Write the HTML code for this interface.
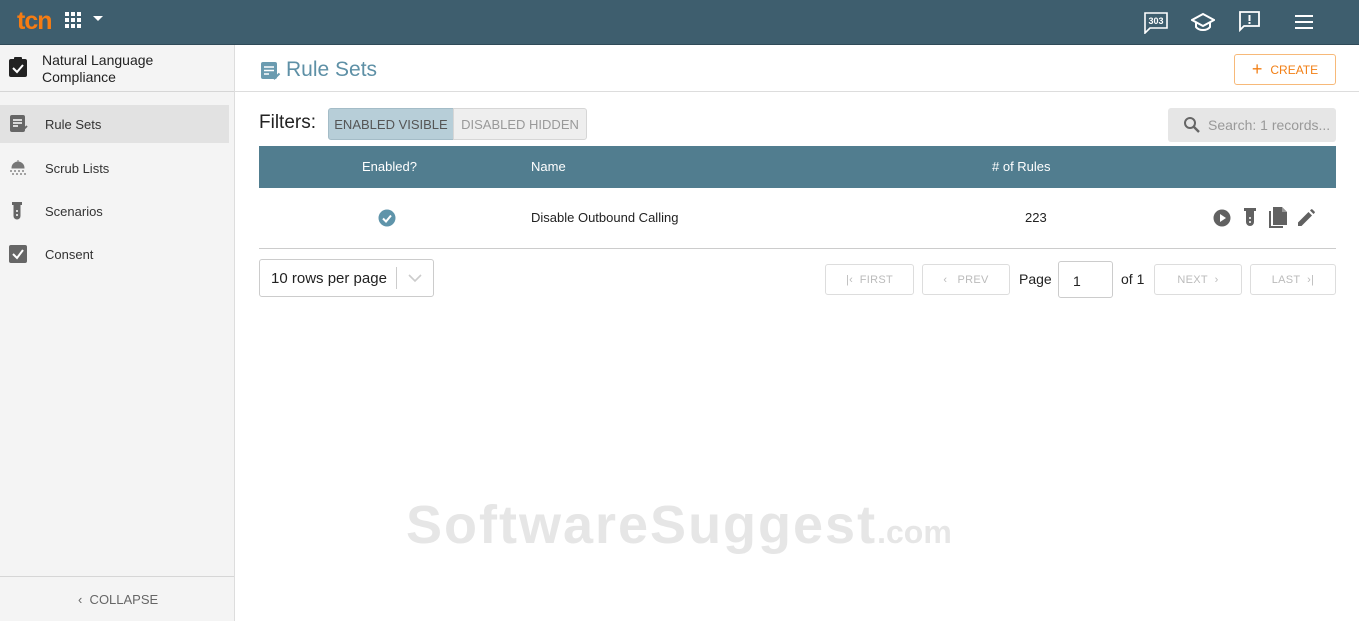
<!DOCTYPE html>
<html><head><meta charset="utf-8"><style>
*{box-sizing:border-box;margin:0;padding:0}
body{width:1359px;height:621px;overflow:hidden;font-family:"Liberation Sans",sans-serif;background:#fff;position:relative;color:#222}
.top{position:absolute;left:0;top:0;width:1359px;height:45px;background:#3e5e6e;border-bottom:1px solid #2f4a58}
.side{position:absolute;left:0;top:45px;width:235px;height:576px;background:#f4f4f4;border-right:1px solid #ddd}
.abs{position:absolute}
.nav{position:absolute;left:0;width:229px;height:38px;font-size:13px;color:#333;display:flex;align-items:center}
.nav span{position:absolute;left:45px}
.btn{position:absolute;height:31px;border:1px solid #ddd;border-radius:3px;font-size:11px;color:#bbb;display:flex;align-items:center;justify-content:center;letter-spacing:.3px}
</style></head><body>
<div class="top">
 <div class="abs" style="left:17px;top:7px;font-size:25px;font-weight:bold;color:#f57c13;letter-spacing:-1px">tcn</div>
 <svg class="abs" style="left:65px;top:12px" width="17" height="16"><g fill="#fff"><rect x="0" y="0" width="4" height="4"/><rect x="6" y="0" width="4" height="4"/><rect x="12" y="0" width="4" height="4"/><rect x="0" y="6" width="4" height="4"/><rect x="6" y="6" width="4" height="4"/><rect x="12" y="6" width="4" height="4"/><rect x="0" y="12" width="4" height="4"/><rect x="6" y="12" width="4" height="4"/><rect x="12" y="12" width="4" height="4"/></g></svg>
 <svg class="abs" style="left:93px;top:16px" width="10" height="6"><path d="M0 0h10L5 5z" fill="#fff"/></svg>
 <svg class="abs" style="left:1144px;top:12px" width="24" height="22"><path d="M1 1h22v15H6l-5 5z" fill="none" stroke="#fff" stroke-width="1.6"/><text x="12" y="12" fill="#fff" font-size="9" font-weight="bold" text-anchor="middle" font-family="Liberation Sans">303</text></svg>
 <svg class="abs" style="left:1191px;top:12px" width="24" height="20"><path d="M12 2L1 8l11 6 11-6z" fill="none" stroke="#fff" stroke-width="2"/><path d="M5 10v5c3 4 11 4 14 0v-5" fill="none" stroke="#fff" stroke-width="2"/></svg>
 <svg class="abs" style="left:1239px;top:11px" width="21" height="21"><path d="M1 1h19v14H5l-4 4z" fill="none" stroke="#fff" stroke-width="1.8"/><rect x="9.5" y="4" width="2" height="6" fill="#fff"/><rect x="9.5" y="11" width="2" height="2" fill="#fff"/></svg>
 <svg class="abs" style="left:1295px;top:15px" width="18" height="14"><g fill="#fff"><rect y="0" width="18" height="2"/><rect y="6" width="18" height="2"/><rect y="12" width="18" height="2"/></g></svg>
</div>
<div class="side">
 <svg class="abs" style="left:9px;top:12px" width="18" height="20"><rect x="0" y="2" width="18" height="18" rx="2" fill="#222"/><rect x="5" y="0" width="8" height="4" rx="1" fill="#222"/><path d="M4 11l4 4 6-7" stroke="#fff" stroke-width="2" fill="none"/></svg>
 <div class="abs" style="left:42px;top:7px;font-size:14px;line-height:17px;color:#222">Natural Language<br>Compliance</div>
 <div class="abs" style="left:0;top:46px;width:234px;border-top:1px solid #d6d6d6"></div>
 <div class="nav" style="top:60px;background:#e2e2e2"><svg class="abs" style="left:10px" width="18" height="18"><rect x="0" y="0" width="15" height="17" rx="2" fill="#666"/><g stroke="#fff" stroke-width="1.5"><path d="M3 5h9M3 8h9M3 11h5"/></g><path d="M10 14l2 2 5-5" stroke="#666" stroke-width="1.8" fill="none"/></svg><span>Rule Sets</span></div>
 <div class="nav" style="top:104px"><svg class="abs" style="left:9px" width="18" height="18"><path d="M9 1v2M3 9a6 6 0 0112 0z" fill="#777" stroke="#777"/><g fill="#888"><circle cx="2" cy="12" r="1"/><circle cx="6" cy="12" r="1"/><circle cx="10" cy="12" r="1"/><circle cx="14" cy="12" r="1"/><circle cx="4" cy="15" r="1"/><circle cx="8" cy="15" r="1"/><circle cx="12" cy="15" r="1"/><circle cx="16" cy="15" r="1"/></g></svg><span>Scrub Lists</span></div>
 <div class="nav" style="top:147px"><svg class="abs" style="left:12px" width="10" height="18"><rect x="0" y="0" width="10" height="3" fill="#666"/><path d="M1.5 3v11a3.5 3.5 0 007 0V3z" fill="#666"/><circle cx="5" cy="9" r="1" fill="#fff"/><circle cx="5" cy="13" r="1" fill="#fff"/></svg><span>Scenarios</span></div>
 <div class="nav" style="top:190px"><svg class="abs" style="left:9px" width="18" height="18"><rect width="18" height="18" rx="2" fill="#666"/><path d="M4 9l4 4 6-8" stroke="#fff" stroke-width="2" fill="none"/></svg><span>Consent</span></div>
 <div class="abs" style="left:0;top:531px;width:234px;border-top:1px solid #d6d6d6"></div>
 <div class="abs" style="left:78px;top:547px;font-size:13px;color:#666">&#8249;&nbsp; COLLAPSE</div>
</div>
<svg class="abs" style="left:261px;top:62px" width="20" height="19"><rect x="0" y="0" width="16" height="17" rx="2" fill="#6a9bb0"/><g stroke="#fff" stroke-width="1.6"><path d="M3 5h10M3 8.5h10M3 12h5"/></g><path d="M11 14l2.5 2.5 5-5" stroke="#6a9bb0" stroke-width="2" fill="none"/></svg>
<div class="abs" style="left:286px;top:58px;font-size:21px;color:#5e90a6">Rule Sets</div>
<div class="abs" style="left:1234px;top:54px;width:102px;height:31px;border:1px solid #f7b979;border-radius:3px;color:#f27f15;font-size:12px;display:flex;align-items:center;justify-content:center"><span style="font-size:18px;margin-right:8px;font-weight:300">+</span>CREATE</div>
<div class="abs" style="left:235px;top:91px;width:1124px;border-top:1px solid #ddd"></div>
<div class="abs" style="left:259px;top:112px;font-size:19px;color:#222">Filters:</div>
<div class="abs" style="left:328px;top:108px;width:126px;height:32px;background:#b7ced8;border:1px solid #a4bcc7;border-radius:3px 0 0 3px;font-size:13px;color:#555;display:flex;align-items:center;justify-content:center">ENABLED VISIBLE</div>
<div class="abs" style="left:453px;top:108px;width:134px;height:32px;background:#eee;border:1px solid #d6d6d6;border-radius:0 3px 3px 0;font-size:13px;color:#999;display:flex;align-items:center;justify-content:center">DISABLED HIDDEN</div>
<div class="abs" style="left:1168px;top:108px;width:168px;height:34px;background:#e6e6e6;border-radius:3px"></div>
<svg class="abs" style="left:1183px;top:116px" width="18" height="18"><circle cx="7" cy="7" r="5" fill="none" stroke="#666" stroke-width="2"/><path d="M11 11l5 5" stroke="#666" stroke-width="2.4"/></svg>
<div class="abs" style="left:1208px;top:117px;font-size:14px;color:#999">Search: 1 records...</div>
<div class="abs" style="left:259px;top:146px;width:1077px;height:42px;background:#517d8f"></div>
<div class="abs" style="left:362px;top:159px;font-size:13px;color:#fff">Enabled?</div>
<div class="abs" style="left:531px;top:159px;font-size:13px;color:#fff">Name</div>
<div class="abs" style="left:992px;top:159px;font-size:13px;color:#fff">#&nbsp;of Rules</div>
<svg class="abs" style="left:378px;top:209px" width="18" height="18"><circle cx="9" cy="9" r="8.5" fill="#5f94aa"/><path d="M5 9.5l3 3 5-6" stroke="#fff" stroke-width="2" fill="none"/></svg>
<div class="abs" style="left:531px;top:210px;font-size:13px;color:#222">Disable Outbound Calling</div>
<div class="abs" style="left:1025px;top:210px;font-size:13px;color:#222">223</div>
<svg class="abs" style="left:1213px;top:209px" width="18" height="18"><circle cx="9" cy="9" r="8.5" fill="#616161"/><path d="M7 5v8l6-4z" fill="#fff"/></svg>
<svg class="abs" style="left:1244px;top:208px" width="12" height="19"><rect x="0" y="0" width="12" height="3" fill="#616161"/><path d="M2 3v11a4 4 0 008 0V3z" fill="#616161"/><circle cx="6" cy="10" r="1" fill="#fff"/><circle cx="6" cy="14" r="1" fill="#fff"/></svg>
<svg class="abs" style="left:1269px;top:207px" width="19" height="21"><path d="M1 4v16h13" stroke="#616161" stroke-width="2" fill="none"/><path d="M4 0h9l5 5v13H4z" fill="#616161"/><path d="M13 0v5h5" fill="#999"/></svg>
<svg class="abs" style="left:1297px;top:209px" width="18" height="18"><path d="M1 13.5V17h3.5L15 6.5 11.5 3z" fill="#616161"/><path d="M13 1.5l3.5 3.5 1-1a1 1 0 000-1.5L15.5 0.5a1 1 0 00-1.5 0z" fill="#616161"/></svg>
<div class="abs" style="left:259px;top:248px;width:1077px;border-top:1px solid #ccc"></div>
<div class="abs" style="left:259px;top:259px;width:175px;height:38px;border:1px solid #ccc;border-radius:3px"></div>
<div class="abs" style="left:271px;top:270px;font-size:15px;color:#222">10 rows per page</div>
<div class="abs" style="left:396px;top:267px;height:22px;border-left:1px solid #ccc"></div>
<svg class="abs" style="left:408px;top:274px" width="14" height="9"><path d="M1 1l6 6 6-6" stroke="#ccc" stroke-width="1.6" fill="none"/></svg>
<div class="btn" style="left:825px;top:264px;width:89px">|&lsaquo;&nbsp;&nbsp;FIRST</div>
<div class="btn" style="left:922px;top:264px;width:88px">&lsaquo;&nbsp;&nbsp;&nbsp;PREV</div>
<div class="abs" style="left:1019px;top:271px;font-size:14px">Page</div>
<div class="abs" style="left:1058px;top:261px;width:55px;height:37px;border:1px solid #ccc;border-radius:3px;font-size:14px;padding:11px 0 0 14px">1</div>
<div class="abs" style="left:1121px;top:271px;font-size:14px">of 1</div>
<div class="btn" style="left:1154px;top:264px;width:88px">NEXT&nbsp;&nbsp;&rsaquo;</div>
<div class="btn" style="left:1250px;top:264px;width:86px">LAST&nbsp;&nbsp;&rsaquo;|</div>
<div class="abs" style="left:406px;top:494px;font-size:54px;font-weight:bold;color:#e6e6e6;letter-spacing:2px;white-space:nowrap">SoftwareSuggest<span style="font-size:32px;letter-spacing:0">.com</span></div>
</body></html>
